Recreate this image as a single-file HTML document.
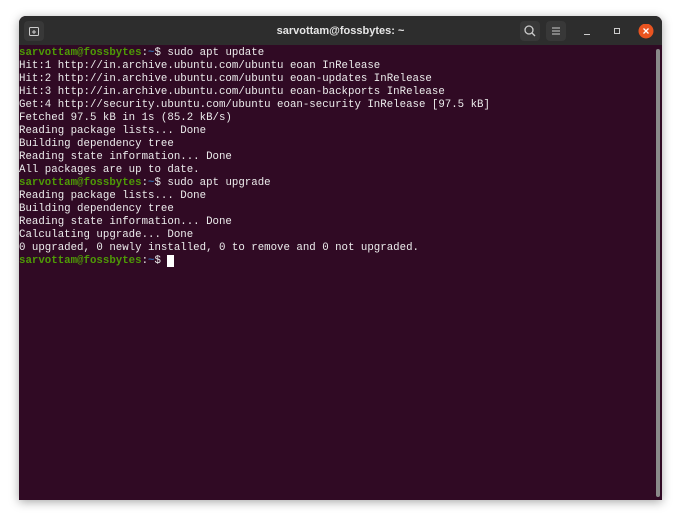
<!DOCTYPE html><html><head><style>
body{margin:0;width:681px;height:521px;background:#fff;position:relative;overflow:hidden}
.win{position:absolute;left:19px;top:16px;width:643px;height:484px;background:#300a24;border-radius:7px 7px 0 0;box-shadow:0 2px 10px rgba(0,0,0,.35);overflow:hidden}
.tb{height:29px;background:#2d2d2d;position:relative;color:#e6e6e6;font:bold 11px "Liberation Sans",sans-serif}
.title{position:absolute;left:0;right:0;top:9px;text-align:center}
.btn{position:absolute;top:5px;width:20px;height:20px;background:#383838;border-radius:4px}
pre{margin:0;position:absolute;left:0;top:31px;font:10.75px/13px "Liberation Mono",monospace;color:#ececec}
.g{color:#4e9a06;font-weight:bold}.b{color:#3465a4;font-weight:bold}
.sb{position:absolute;left:637px;top:33px;width:4px;height:448px;background:#8a8a8a;border-radius:2px}
</style></head><body>
<div class="win">
<div class="tb">
<div class="btn" style="left:5px"><svg width="20" height="20"><rect x="5.5" y="6.5" width="9" height="8" rx="1" fill="none" stroke="#ccc"/><path d="M10 9v4M8 11h4" stroke="#ccc"/></svg></div>
<div class="title">sarvottam@fossbytes: ~</div>
<div class="btn" style="left:501px"><svg width="20" height="20"><circle cx="9" cy="9" r="4" fill="none" stroke="#ccc" stroke-width="1.3"/><path d="M12 12l3 3" stroke="#ccc" stroke-width="1.3"/></svg></div>
<div class="btn" style="left:527px"><svg width="20" height="20"><path d="M6 7h8M6 10h8M6 13h8" stroke="#ccc"/></svg></div>
<svg style="position:absolute;left:561px;top:8px" width="80" height="16"><path d="M4 10.5h6" stroke="#ccc"/><rect x="34.5" y="4.5" width="5" height="5" fill="none" stroke="#ccc"/><circle cx="66" cy="7" r="7.5" fill="#e95420"/><path d="M63.5 4.5l5 5M68.5 4.5l-5 5" stroke="#fff" stroke-width="1.3"/></svg>
</div>
<pre><span class="g">sarvottam@fossbytes</span>:<span class="b">~</span>$ sudo apt update
Hit:1 http://in.archive.ubuntu.com/ubuntu eoan InRelease
Hit:2 http://in.archive.ubuntu.com/ubuntu eoan-updates InRelease
Hit:3 http://in.archive.ubuntu.com/ubuntu eoan-backports InRelease
Get:4 http://security.ubuntu.com/ubuntu eoan-security InRelease [97.5 kB]
Fetched 97.5 kB in 1s (85.2 kB/s)
Reading package lists... Done
Building dependency tree
Reading state information... Done
All packages are up to date.
<span class="g">sarvottam@fossbytes</span>:<span class="b">~</span>$ sudo apt upgrade
Reading package lists... Done
Building dependency tree
Reading state information... Done
Calculating upgrade... Done
0 upgraded, 0 newly installed, 0 to remove and 0 not upgraded.
<span class="g">sarvottam@fossbytes</span>:<span class="b">~</span>$ <span style="background:#fff">&nbsp;</span></pre>
<div class="sb"></div>
</div>
</body></html>
